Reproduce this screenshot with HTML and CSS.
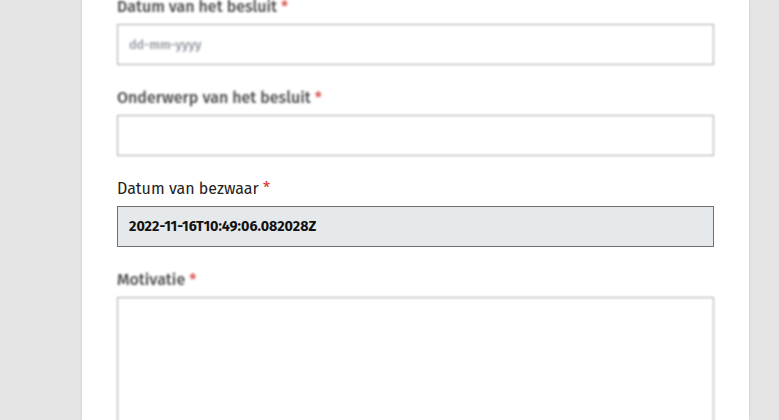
FILE: index.html
```html
<!DOCTYPE html>
<html lang="nl">
<head>
<meta charset="utf-8">
<link rel="stylesheet" href="styles.css">
</head>
<body>
<div class="page">
  <div class="card">
    <form class="form">
      <div class="field blurred">
        <label class="label">Datum van het besluit <span class="req">*</span></label>
        <div class="input"><span class="placeholder">dd-mm-yyyy</span></div>
      </div>
      <div class="field blurred">
        <label class="label">Onderwerp van het besluit <span class="req">*</span></label>
        <div class="input"></div>
      </div>
      <div class="field">
        <label class="label">Datum van bezwaar <span class="req">*</span></label>
        <div class="input readonly">2022-11-16T10:49:06.082028Z</div>
      </div>
      <div class="field blurred">
        <label class="label">Motivatie <span class="req">*</span></label>
        <div class="input textarea"></div>
      </div>
    </form>
  </div>
</div>
</body>
</html>
```
FILE: styles.css
```css
html, body {
  margin: 0;
  padding: 0;
  height: 100%;
  overflow: hidden;
}
body {
  background: #e5e5e5;
  font-family: "Fira Sans", "Noto Sans", "Open Sans", sans-serif;
  color: #222;
}
.page {
  display: flex;
  height: 100%;
}
.card {
  margin-left: 82px;
  width: 667px;
  background: #fff;
  box-shadow: 0 0 3px rgba(0,0,0,0.12);
  padding: 0 35px;
  box-sizing: border-box;
}
.form {
  margin-top: -5px;
  display: flex;
  flex-direction: column;
}
.field {
  display: flex;
  flex-direction: column;
  gap: 5px;
  margin-bottom: 21px;
}
.label {
  font-size: 16px;
  line-height: 24px;
  height: 24px;
  color: #222;
}
.req {
  color: #d0312d;
}
.input {
  height: 41px;
  box-sizing: border-box;
  border: 1px solid #8a8a8a;
  background: #fff;
  padding: 0 11px;
  display: flex;
  align-items: center;
  font-size: 14.3px;
  font-weight: 700;
  color: #111;
}
.readonly {
  background: #e6e9ec;
  border-color: #6f6f6f;
}
.placeholder {
  color: #8a8f99;
  font-weight: 600;
  font-size: 12.6px;
}
.textarea {
  height: 160px;
}
.blurred {
  filter: blur(1px);
  opacity: 0.85;
}
.blurred .label {
  font-weight: 500;
  color: #2a2a2a;
}
.blurred .input {
  border-color: #999;
}
```
